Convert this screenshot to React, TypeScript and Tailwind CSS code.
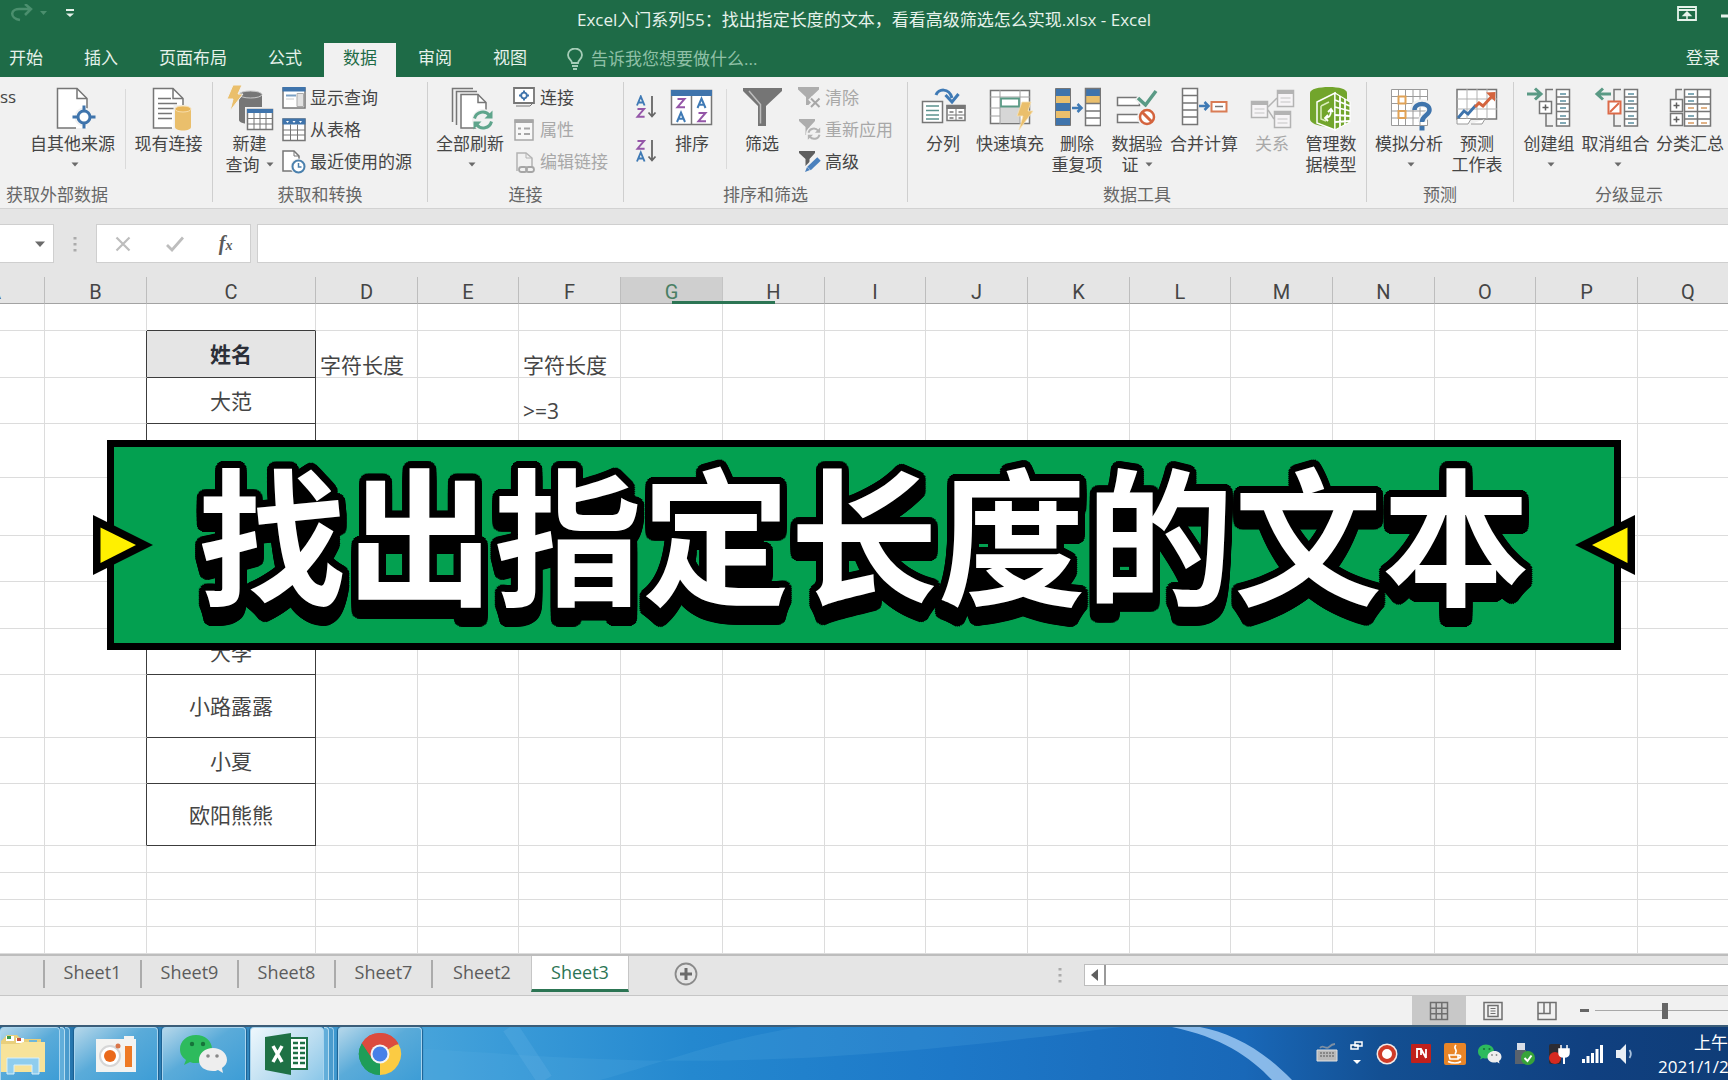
import React from "react";

type Kids = { children?: React.ReactNode };

const G = "#767676";

function Big({ children }: Kids) {
  return (
    <svg width="48" height="48" viewBox="0 0 48 48" fill="none" className="shrink-0" aria-hidden="true">
      {children}
    </svg>
  );
}

function Small({ children }: Kids) {
  return (
    <svg width="24" height="24" viewBox="0 0 24 24" fill="none" className="shrink-0" aria-hidden="true">
      {children}
    </svg>
  );
}

function Caret() {
  return (
    <svg width="8" height="5" viewBox="0 0 8 5" className="shrink-0" aria-hidden="true">
      <path d="M0.5 0.5h7L4 4.5z" fill="#6a6a6a" />
    </svg>
  );
}

/* ---------- large ribbon icons ---------- */

const Doc = () => (
  <>
    <path d="M8.500 3.500H28L38 13.500V43H8.500z" fill="#fff" />
    <path d="M38 26V13.500L28 3.500H8.500V43H27" stroke={G} strokeWidth="1.500" />
    <path d="M28 3.500V13.500H38" stroke={G} strokeWidth="1.500" />
  </>
);

const OtherSourceIcon = () => (
  <Big>
    <Doc />
    <circle cx="35" cy="32" r="9.500" fill="#f1f1f1" />
    <circle cx="35" cy="32" r="6" fill="#fff" stroke="#3f74ac" strokeWidth="3" />
    <path d="M35 20.500v6M35 37.500v6M23.500 32h6M40.500 32h6" stroke="#3f74ac" strokeWidth="3" />
  </Big>
);

const ExistingIcon = () => (
  <Big>
    <Doc />
    <path d="M13 13.500h13M13 18.500h19M13 23.500h16M13 28.500h14M13 33.500h14" stroke={G} strokeWidth="1.500" />
    <path d="M28.500 20h19v26h-19z" fill="#f1f1f1" />
    <path d="M30 24v18c0 2 3.500 3.500 8 3.500s8-1.500 8-3.500V24z" fill="#eabf6c" />
    <ellipse cx="38" cy="24" rx="8" ry="3" fill="#e8b659" stroke="#f7deae" />
  </Big>
);

const MiniTable = ({ x, y }: { x: number; y: number }) => (
  <g transform={`translate(${x} ${y})`}>
    <path d="M0.500 0.500h25v20h-25z" fill="#fff" stroke={G} strokeWidth="1.500" />
    <path d="M0 0h26v4H0z" fill="#3f74ac" />
    <path d="M7 4v16M13 4v16M19 4v16M1 9.500h24M1 15h24" stroke={G} />
  </g>
);

const NewQueryIcon = () => (
  <Big>
    <path d="M13 9v26c0 2 4 4 11.500 4S36 37 36 35V9z" fill="#767676" />
    <ellipse cx="24.500" cy="9.500" rx="11.500" ry="3.500" fill="#767676" stroke="#c9c9c9" />
    <path d="M7 0h9l-4 9h5L4 26l3-12H1z" fill="#eabf6c" stroke="#f1f1f1" strokeWidth="1" />
    <path d="M19 22h29v25H19z" fill="#f1f1f1" />
    <MiniTable x={21} y={24} />
  </Big>
);

const RefreshArrows = ({ c }: { c: string }) => (
  <>
    <path d="M1.500 8a8.500 8.500 0 0 1 15-3M18.500 11a8.500 8.500 0 0 1-15 3" stroke={c} strokeWidth="3" />
    <path d="M19.500 0v8h-8zM.5 19v-8h8z" fill={c} />
  </>
);

const RefreshAllIcon = () => (
  <Big>
    <path d="M6.500 37V3.500H27M10.500 40V6.500H31" stroke={G} strokeWidth="1.500" />
    <path d="M15 9.500H32L40 17.500V43H15z" fill="#fff" stroke={G} strokeWidth="1.500" />
    <path d="M32 9.500v8h8" stroke={G} strokeWidth="1.500" />
    <circle cx="37" cy="35" r="11" fill="#f1f1f1" />
    <g transform="translate(27 25.500)">
      <RefreshArrows c="#5fa58c" />
    </g>
  </Big>
);

const LetterA = ({ x, y, s = 1 }: { x: number; y: number; s?: number }) => (
  <path
    transform={`translate(${x} ${y}) scale(${s})`}
    d="M0.500 10L4.500 0.500L8.500 10M2 6.800H7"
    stroke="#3f7ab5"
    strokeWidth="2"
  />
);
const LetterZ = ({ x, y, s = 1 }: { x: number; y: number; s?: number }) => (
  <path
    transform={`translate(${x} ${y}) scale(${s})`}
    d="M0.500 1H7.500L0.500 9.200H8"
    stroke="#9456a8"
    strokeWidth="2"
  />
);

const SortIcon = () => (
  <Big>
    <path d="M3.500 5.500h40v34h-40z" fill="#fff" stroke={G} strokeWidth="1.500" />
    <path d="M3 5h41v6H3z" fill="#3f74ac" />
    <path d="M23.500 11v29" stroke={G} strokeWidth="1.500" />
    <LetterZ x={9} y={13} />
    <LetterA x={8.5} y={27} />
    <LetterA x={29} y={13} />
    <LetterZ x={30} y={27} />
  </Big>
);

const FilterIcon = () => (
  <Big>
    <path d="M5 3h39v3L28 21v20h-8V21L5 6z" fill="#757575" />
    <path d="M11 6l11.500 13.500v19" stroke="#bdbdbd" strokeWidth="1.500" />
  </Big>
);

const TextColsIcon = () => (
  <Big>
    <path d="M17 10c2-6 13-8 16 3" stroke="#3f7ab5" strokeWidth="3" />
    <path d="M26.500 10L33 17l6.500-8" stroke="#3f7ab5" strokeWidth="3" />
    <path d="M3.500 16.500h20v21h-20z" fill="#fff" stroke={G} strokeWidth="1.500" />
    <path d="M7 21h13M7 25.500h13M7 30h13M7 34h13" stroke="#5b938f" strokeWidth="1.500" />
    <path d="M28 20.500h18v15H28z" fill="#fff" stroke={G} strokeWidth="1.500" />
    <path d="M27.500 20h19v4h-19z" fill={G} />
    <path d="M37 24v12M29 30h17" stroke={G} />
    <path d="M30.500 27h4M39.500 27h4M30.500 33h4M39.500 33h4" stroke={G} strokeWidth="1.500" />
  </Big>
);

const FlashFillIcon = () => (
  <Big>
    <path d="M4.500 5.500h39v33h-39z" fill="#fff" stroke={G} strokeWidth="1.500" />
    <path d="M14 22h20v16H14z" fill="#d6d6d6" />
    <path d="M4 12h40M4 23h10M4 31h10M14 5v34M34 5v34" stroke="#a0a0a0" />
    <path d="M15 13.500h18v8H15z" fill="#fff" stroke="#5a9a85" strokeWidth="1.800" />
    <path d="M36 17h9l-3 9h5L33 45l4-14h-6z" fill="#eabf6c" stroke="#f6e2b8" strokeWidth="0.800" />
  </Big>
);

const BlueArrow = ({ x, y }: { x: number; y: number }) => (
  <path d={`M${x} ${y}h9M${x + 5.5} ${y - 4}l4 4l-4 4`} stroke="#3f7ab5" strokeWidth="2.500" />
);

const RemoveDupIcon = () => (
  <Big>
    <path d="M2.500 3.500h15v37h-15z" fill="#3f74ac" />
    <path d="M2.500 11h15v7h-15zM2.500 26h15v7h-15z" fill="#eabf6c" />
    <path d="M2.500 3.500h15v37h-15z" stroke={G} />
    <path d="M32.500 3.500h15v37h-15z" fill="#fff" />
    <path d="M32.500 3.500h15V11h-15z" fill="#3f74ac" />
    <path d="M32.500 11h15v7h-15z" fill="#eabf6c" />
    <path d="M32.500 3.500h15v37h-15zM32.500 18.500h15M32.500 26h15M32.500 33h15" stroke={G} strokeWidth="1.500" />
    <BlueArrow x={19} y={23} />
  </Big>
);

const ValidationIcon = () => (
  <Big>
    <path d="M4.500 12.500h22v8h-22zM4.500 29.500h22v8h-22z" fill="#fff" stroke={G} strokeWidth="1.500" />
    <path d="M24 12l8 7L43 6" stroke="#f1f1f1" strokeWidth="7" />
    <path d="M25 13l7.500 7L43 6" stroke="#5a9a85" strokeWidth="3.500" />
    <circle cx="34" cy="32" r="10" fill="#f1f1f1" />
    <circle cx="34" cy="32" r="7" fill="#fff" stroke="#d4643e" strokeWidth="2.500" />
    <path d="M29 27l10 10" stroke="#d4643e" strokeWidth="3" />
  </Big>
);

const ConsolidateIcon = () => (
  <Big>
    <path d="M2.500 3.500h15v36h-15z" fill="#fff" />
    <path d="M2.500 3.500h15v36h-15zM2.500 10.500h15M2.500 18h15M2.500 25h15M2.500 32h15" stroke={G} strokeWidth="1.500" />
    <BlueArrow x={19} y={21} />
    <path d="M31.500 17h15v9.500h-15z" fill="#fff" stroke="#d97c55" strokeWidth="2" />
    <path d="M35 21.500h8" stroke={G} strokeWidth="1.500" />
  </Big>
);

const RelBox = ({ x, y }: { x: number; y: number }) => (
  <g transform={`translate(${x} ${y})`}>
    <path d="M0.500 0.500h16v16h-16z" fill="#f6f4f6" stroke="#b3b3b3" strokeWidth="1.500" />
    <path d="M0 0h17v4H0z" fill="#b3b3b3" />
    <path d="M3.500 8h10M3.500 12h10" stroke="#c4c4c4" />
  </g>
);

const RelationsIcon = () => (
  <Big>
    <path d="M20 22l9-9M20 25l6 9" stroke="#b3b3b3" strokeWidth="1.500" />
    <RelBox x={3} y={16} />
    <RelBox x={29} y={5} />
    <RelBox x={26} y={26} />
  </Big>
);

const DataModelIcon = () => (
  <Big>
    <path d="M3 8c0-4 9-6 19-6s18 2 18 6v20L22 42C10 41 3 38 3 34z" fill="#72a52c" />
    <path d="M10 17L28 8v37L10 38z" fill="#72a52c" stroke="#fff" strokeWidth="1.500" />
    <path d="M28 8l15 9v20L28 45z" fill="#72a52c" stroke="#fff" strokeWidth="1.200" />
    <path d="M28 15l15 6M28 22l15 4M28 30l15 1M28 37l15-1M33 11v31M38 14v26" stroke="#fff" strokeWidth="1.800" />
    <path d="M14 21l8-4M14 21v13l5 2" stroke="#d9edba" strokeWidth="1.500" />
    <path d="M18 33c5 0 6-3 6-8M21 27l3-3 2 3M21 30l-3 3 3 3" stroke="#fff" strokeWidth="1.800" />
  </Big>
);

const WhatIfIcon = () => (
  <Big>
    <path d="M6.500 4.500h36v36h-36z" fill="#fff" />
    <path d="M6.500 4.500h36v36h-36zM13.500 4v37M20.500 4v37M28 4v37M35 4v37M6 11.500h37M6 18.500h37M6 26h37M6 33h37" stroke="#9a9a9a" />
    <path d="M13.500 11.500h7v7h-7zM13.500 26h7v7h-7z" stroke="#e0a256" strokeWidth="2" />
    <path d="M29 25c0-9 16-9 16 0 0 6-8 5-8 12" stroke="#f1f1f1" strokeWidth="8" />
    <path d="M29.500 25c0-8 15-8 15 0 0 5.500-7.500 5-7.500 12" stroke="#3f74ac" strokeWidth="4.500" />
    <path d="M34.500 41h5v4.500h-5z" fill="#3f74ac" />
  </Big>
);

const ForecastIcon = () => (
  <Big>
    <path d="M4 4.500h39.500v29.500H4z" fill="#fff" stroke={G} strokeWidth="1.500" />
    <path d="M14 4v30M24 4v30M34 4v30M4 14h40M4 24h40" stroke="#b3b3b3" />
    <path d="M4 34v5h11l3-5M18 39h11l3-5" fill="#fff" stroke="#9a9a9a" />
    <path d="M5 33l6-7 4 3 8-9" stroke="#3f74ac" strokeWidth="2.800" />
    <path d="M22 22l4-4 4 3L41 9" stroke="#d4643e" strokeWidth="3" />
    <path d="M33 7.500l9.500-.5-.5 9.500z" fill="#d4643e" />
  </Big>
);

const List5 = ({ x, w = 13 }: { x: number; w?: number }) => (
  <g transform={`translate(${x} 4)`}>
    <path d={`M.5 .5h${w}v36.500h-${w}zM.5 8h${w}M.5 15h${w}M.5 22.500h${w}M.5 30h${w}`} fill="#fff" stroke={G} strokeWidth="1.500" />
    <path d="M4 5h6M4 12h6M4 19h6M4 27h6M4 34h6" stroke="#5a8fa0" strokeWidth="1.500" />
  </g>
);

const PlusBox = ({ x, y }: { x: number; y: number }) => (
  <g transform={`translate(${x} ${y})`}>
    <path d="M.5 .5h12v12H.5z" fill="#fff" stroke={G} strokeWidth="1.500" />
    <path d="M3.500 6.500h6M6.500 3.500v6" stroke="#5f5f5f" strokeWidth="1.500" />
  </g>
);

const GroupIcon = () => (
  <Big>
    <path d="M2 9h13M10 3.500l6 5.500l-6 5.500" stroke="#5a9a85" strokeWidth="3" />
    <path d="M28 4.500h-7V41h7" stroke={G} strokeWidth="1.500" />
    <PlusBox x={14} y={16} />
    <List5 x={31} />
  </Big>
);

const UngroupIcon = () => (
  <Big>
    <path d="M19 9H5M11 3.500L5 9l6 5.500" stroke="#5a9a85" strokeWidth="3" />
    <path d="M29 4.500h-7V41h7" stroke={G} strokeWidth="1.500" />
    <path d="M16.500 16.500h12v12h-12z" fill="#fff" stroke="#dc6a48" strokeWidth="2" />
    <path d="M18 27l9-9" stroke="#dc6a48" strokeWidth="2" />
    <List5 x={32} />
  </Big>
);

const SubtotalIcon = () => (
  <Big>
    <path d="M16 4.500h-6V14" stroke={G} strokeWidth="1.500" />
    <PlusBox x={4} y={14} />
    <PlusBox x={4} y={28} />
    <path d="M18.500 4.500h26V41h-26z" fill="#fff" />
    <path d="M18.500 4.500h26V41h-26zM31.500 4v37M18 12h26M18 19h26M18 26.500h26M18 34h26" stroke={G} strokeWidth="1.500" />
    <path d="M22 9h6M22 16h6M22 31h6" stroke="#5a8fa0" strokeWidth="1.500" />
    <path d="M22 23h6M35 23h6M22 38h6M35 38h6" stroke="#d89b62" strokeWidth="1.500" />
  </Big>
);

/* ---------- small ribbon icons ---------- */

const ShowQueryIcon = () => (
  <Small>
    <path d="M1 2h22v20H1z" fill="#fff" stroke={G} strokeWidth="1.500" />
    <path d="M.5 1h23v4.500H.5z" fill="#3f74ac" />
    <path d="M4 9.500h10" stroke="#7aa0c4" strokeWidth="2" />
    <path d="M15 7.500h6.500v13H15z" fill="#e2e2e2" stroke="#aaa" />
    <path d="M4 13h8" stroke="#ccc" />
  </Small>
);
const FromTableIcon = () => (
  <Small>
    <path d="M1 1h22v21.500H1z" fill="#fff" stroke={G} strokeWidth="1.500" />
    <path d="M.5 .5h23v6H.5z" fill="#3f74ac" />
    <path d="M4 3h3l-1.500 2zM10.500 3h3L12 5zM17 3h3l-1.500 2z" fill="#fff" />
    <path d="M8.500 6.500v16M15.500 6.500v16M1 12h22M1 17h22" stroke={G} />
  </Small>
);
const RecentIcon = () => (
  <Small>
    <path d="M1 1h11l5 5v15H1z" fill="#fff" stroke={G} strokeWidth="1.500" />
    <path d="M12 1v5h5" stroke={G} />
    <circle cx="16.500" cy="16.500" r="8" fill="#f1f1f1" />
    <circle cx="16.500" cy="16.500" r="6" fill="#fff" stroke="#4a80ad" strokeWidth="2" />
    <path d="M16.500 13v4h3" stroke="#4a80ad" strokeWidth="1.500" />
  </Small>
);
const ConnIcon = () => (
  <Small>
    <path d="M2 2h20v15H2z" fill="#fff" stroke={G} strokeWidth="1.800" />
    <path d="M4 20h14l2-2" stroke={G} />
    <circle cx="12" cy="9.500" r="2.800" stroke="#3f74ac" strokeWidth="1.800" />
    <path d="M12 4.500v2M12 12.500v2M7 9.500h2M15 9.500h2" stroke="#3f74ac" strokeWidth="2" />
  </Small>
);
const PropIcon = () => (
  <Small>
    <path d="M3 2h18v20H3z" fill="#f8f8f8" stroke="#a6a6a6" strokeWidth="1.500" />
    <path d="M2.500 1.500h19V5h-19z" fill="#a6a6a6" />
    <path d="M6 10.500h3M6 16h3M12 10.500h6M12 16h6" stroke="#a6a6a6" strokeWidth="1.800" />
  </Small>
);
const EditLinkIcon = () => (
  <Small>
    <path d="M5 21V3h9l6 5v9" stroke="#b3b3b3" strokeWidth="1.500" />
    <path d="M14 3v5h6" stroke="#b3b3b3" />
    <rect x="7" y="17" width="8" height="5" rx="2.500" stroke="#a6a6a6" strokeWidth="1.800" />
    <rect x="14" y="17" width="8" height="5" rx="2.500" stroke="#a6a6a6" strokeWidth="1.800" />
  </Small>
);
const Funnel = ({ c }: { c: string }) => <path d="M1 1h21v2.500L14 11v8h-5v-8L1 3.500z" fill={c} />;
const ClearIcon = () => (
  <Small>
    <Funnel c="#adadad" />
    <path d="M13 12l9 9M22 12l-9 9" stroke="#f1f1f1" strokeWidth="5" />
    <path d="M14 12.500l8.500 8.500M22.500 12.500L14 21" stroke="#a6a6a6" strokeWidth="2" />
  </Small>
);
const ReapplyIcon = () => (
  <Small>
    <path d="M2 1h16v2l-5.500 6v8h-4V9L2 3z" fill="#adadad" />
    <circle cx="17" cy="16" r="8" fill="#f1f1f1" />
    <g transform="translate(10.500 9.500) scale(.65)">
      <RefreshArrows c="#b3b3b3" />
    </g>
  </Small>
);
const AdvancedIcon = () => (
  <Small>
    <path d="M2 1h16v2l-5.500 6v7h-4V9L2 3z" fill="#5f5f5f" />
    <path d="M10 20L21 9" stroke="#f1f1f1" strokeWidth="8" />
    <path d="M12 18.500L22 9" stroke="#4a80bd" strokeWidth="5" />
    <path d="M8 22l2-5 3 3z" fill="#4a80bd" />
  </Small>
);
const SortSmall = ({ desc }: { desc?: boolean }) => (
  <svg width="24" height="24" viewBox="0 0 24 24" fill="none" aria-hidden="true">
    {desc ? (
      <>
        <LetterZ x={3} y={1} s={0.95} />
        <LetterA x={2.5} y={13} s={0.95} />
      </>
    ) : (
      <>
        <LetterA x={2.5} y={1} s={0.95} />
        <LetterZ x={3} y={13} s={0.95} />
      </>
    )}
    <path d="M18 1v20M14.500 17.500L18 21.500l3.500-4" stroke="#666" strokeWidth="1.800" />
  </svg>
);

/* ---------- ribbon building blocks ---------- */

function BigButton({
  icon, lines, drop, className = "", disabled,
}: { icon: React.ReactNode; lines: string[]; drop?: boolean; className?: string; disabled?: boolean }) {
  return (
    <button
      type="button"
      disabled={disabled}
      className={`flex shrink-0 flex-col items-center pt-2 leading-[21px] whitespace-nowrap disabled:text-[#a8a8a8] ${className}`}
    >
      {icon}
      <span>{lines[0]}</span>
      {(lines[1] || drop) && (
        <span className={`flex h-[21px] items-center gap-1.5 ${lines[1] ? "" : "pl-1"}`}>
          {lines[1]}
          {drop && <Caret />}
        </span>
      )}
    </button>
  );
}

function SmallButton({ icon, text, disabled }: { icon: React.ReactNode; text: string; disabled?: boolean }) {
  return (
    <button type="button" disabled={disabled} className="flex h-8 items-center gap-1 whitespace-nowrap disabled:text-[#a8a8a8]">
      {icon}
      <span>{text}</span>
    </button>
  );
}

function Group({ label, className, labelClass = "text-center", children }: Kids & { label: string; className: string; labelClass?: string }) {
  return (
    <section aria-label={label} className={`flex shrink-0 flex-col ${className}`}>
      <div className="flex h-[107px] items-start">{children}</div>
      <div className={`leading-[21px] text-[#666] ${labelClass}`}>{label}</div>
    </section>
  );
}

const Divider = () => <div className="mt-[5px] mb-1.5 w-px shrink-0 bg-[#cfcfcf]" />;
const InnerDivider = () => <div className="mt-3 h-20 w-px shrink-0 bg-[#dadada]" />;

const TABS = ["开始", "插入", "页面布局", "公式", "数据", "审阅", "视图"];

function TitleBar() {
  return (
    <header className="bg-[#1e6b47] text-[#e6f2eb]">
      <div className="grid h-[43px] grid-cols-[1fr_auto_1fr] items-start">
        <div className="flex items-start pt-1 pl-2.5">
          <svg width="70" height="20" viewBox="0 0 70 20" fill="none" aria-hidden="true">
            <path d="M10 16C-1 14 0 4 11 5h9M15 0l6 5-6 6" stroke="#4b8f6e" strokeWidth="2.500" />
            <path d="M30 7h7l-3.500 4z" fill="#4b8f6e" />
            <path d="M56 6h8" stroke="#e6f2eb" strokeWidth="2" />
            <path d="M56 9.500h8L60 13z" fill="#e6f2eb" />
          </svg>
        </div>
        <h2 className="pt-2 text-[17px] leading-6 whitespace-nowrap">Excel入门系列55：找出指定长度的文本，看看高级筛选怎么实现.xlsx - Excel</h2>
        <div className="flex justify-end pt-1.5">
          <svg width="51" height="16" viewBox="0 0 51 16" fill="none" aria-hidden="true">
            <path d="M1 1h18v13H1zM1 4h18" stroke="#e6f2eb" strokeWidth="1.800" />
            <path d="M10 13V7M6.500 9.500L10 6l3.500 3.500z" stroke="#e6f2eb" strokeWidth="1.500" fill="#e6f2eb" />
            <path d="M44 10h8" stroke="#e6f2eb" strokeWidth="3" />
          </svg>
        </div>
      </div>
      <nav aria-label="功能区" className="flex h-[34px] items-stretch gap-[3px]">
        {TABS.map((t, i) => (
          <button
            key={t}
            type="button"
            aria-current={t === "数据" ? "page" : undefined}
            className={`pr-[19px] pb-1 ${i === 0 ? "pl-[9px]" : "pl-[19px]"} ${t === "数据" ? "bg-[#f1f1f1] text-[#1e6b47]" : ""}`}
          >
            {t}
          </button>
        ))}
        <label className="ml-[18px] flex flex-1 items-center gap-2 pb-0.5">
          <svg width="16" height="22" viewBox="0 0 16 22" fill="none" aria-hidden="true">
            <path d="M5 15c0-3-4-4-4-8a7 6.500 0 0 1 14 0c0 4-4 5-4 8zM5 18h6M6 21h4" stroke="#a5cdb8" strokeWidth="1.800" />
          </svg>
          <input
            type="text"
            aria-label="告诉我您想要做什么"
            placeholder="告诉我您想要做什么..."
            className="w-60 bg-transparent outline-none placeholder:text-[#8fc0a6]"
          />
        </label>
        <button type="button" className="pr-2 pb-1">登录</button>
      </nav>
    </header>
  );
}

function Ribbon() {
  return (
    <div className="flex h-[132px] overflow-hidden border-b border-[#d2d2d2] bg-[#f1f1f1] text-[#454545]">
      <Group label="获取外部数据" className="w-[212px]" labelClass="pl-1.5">
        <span className="w-[30px] pt-2 leading-6">ss</span>
        <BigButton icon={<OtherSourceIcon />} lines={["自其他来源"]} drop className="mr-2.5 w-[85px]" />
        <InnerDivider />
        <BigButton icon={<ExistingIcon />} lines={["现有连接"]} className="w-[85px]" />
      </Group>
      <Divider />
      <Group label="获取和转换" className="w-[214px]">
        <BigButton icon={<NewQueryIcon />} lines={["新建", "查询"]} drop className="ml-1 w-[65px]" />
        <div className="flex flex-col pt-[5px]">
          <SmallButton icon={<ShowQueryIcon />} text="显示查询" />
          <SmallButton icon={<FromTableIcon />} text="从表格" />
          <SmallButton icon={<RecentIcon />} text="最近使用的源" />
        </div>
      </Group>
      <Divider />
      <Group label="连接" className="w-[195px]">
        <BigButton icon={<RefreshAllIcon />} lines={["全部刷新"]} drop className="w-[84px]" />
        <div className="flex flex-col pt-[5px]">
          <SmallButton icon={<ConnIcon />} text="连接" />
          <SmallButton icon={<PropIcon />} text="属性" disabled />
          <SmallButton icon={<EditLinkIcon />} text="编辑链接" disabled />
        </div>
      </Group>
      <Divider />
      <Group label="排序和筛选" className="w-[283px]">
        <div className="flex w-[34px] flex-col items-end gap-5 pt-[18px]">
          <button type="button" aria-label="升序"><SortSmall /></button>
          <button type="button" aria-label="降序"><SortSmall desc /></button>
        </div>
        <BigButton icon={<SortIcon />} lines={["排序"]} className="w-[68px]" />
        <InnerDivider />
        <BigButton icon={<FilterIcon />} lines={["筛选"]} className="w-[70px]" />
        <div className="flex flex-col pt-[5px]">
          <SmallButton icon={<ClearIcon />} text="清除" disabled />
          <SmallButton icon={<ReapplyIcon />} text="重新应用" disabled />
          <SmallButton icon={<AdvancedIcon />} text="高级" />
        </div>
      </Group>
      <Divider />
      <Group label="数据工具" className="w-[458px]">
        <BigButton icon={<TextColsIcon />} lines={["分列"]} className="ml-[7px] w-14" />
        <BigButton icon={<FlashFillIcon />} lines={["快速填充"]} className="w-[78px]" />
        <BigButton icon={<RemoveDupIcon />} lines={["删除", "重复项"]} className="w-14" />
        <BigButton icon={<ValidationIcon />} lines={["数据验", "证"]} drop className="w-16" />
        <BigButton icon={<ConsolidateIcon />} lines={["合并计算"]} className="w-[70px]" />
        <BigButton icon={<RelationsIcon />} lines={["关系"]} disabled className="w-[66px]" />
        <BigButton icon={<DataModelIcon />} lines={["管理数", "据模型"]} className="w-[52px]" />
      </Group>
      <Divider />
      <Group label="预测" className="w-[146px]">
        <BigButton icon={<WhatIfIcon />} lines={["模拟分析"]} drop className="ml-2 w-[68px]" />
        <BigButton icon={<ForecastIcon />} lines={["预测", "工作表"]} className="w-[68px]" />
      </Group>
      <Divider />
      <Group label="分级显示" className="min-w-[214px] flex-1" labelClass="w-[230px] text-center">
        <BigButton icon={<GroupIcon />} lines={["创建组"]} drop className="ml-[9px] w-[52px]" />
        <BigButton icon={<UngroupIcon />} lines={["取消组合"]} drop className="w-[81px]" />
        <BigButton icon={<SubtotalIcon />} lines={["分类汇总"]} className="w-[68px]" />
      </Group>
    </div>
  );
}

const Dots = () => (
  <svg width="4" height="16" viewBox="0 0 4 16" aria-hidden="true">
    <path d="M.5 1h3v2.500h-3zM.5 7h3v2.500h-3zM.5 13h3v2.500h-3z" fill="#ababab" />
  </svg>
);

function FormulaBar() {
  return (
    <div className="flex h-[68px] items-start bg-[#e5e5e5] pt-[15px]">
      <div className="flex h-[39px] w-[54px] items-center justify-end border border-l-0 border-[#cfcfcf] bg-white pr-2">
        <button type="button" aria-label="名称框">
          <svg width="10" height="6" viewBox="0 0 10 6" aria-hidden="true">
            <path d="M0 .5h10L5 6z" fill="#6a6a6a" />
          </svg>
        </button>
      </div>
      <div className="flex h-[39px] w-[42px] items-center justify-center"><Dots /></div>
      <div className="mr-1.5 flex h-[39px] w-[155px] items-center justify-around border border-[#cfcfcf] bg-white">
        <button type="button" aria-label="取消">
          <svg width="16" height="16" viewBox="0 0 16 16" aria-hidden="true"><path d="M1.500 1.500l13 13M14.500 1.500l-13 13" stroke="#bdbdbd" strokeWidth="2.200" /></svg>
        </button>
        <button type="button" aria-label="输入">
          <svg width="18" height="16" viewBox="0 0 18 16" fill="none" aria-hidden="true"><path d="M1 9l5 5L17 1.500" stroke="#bdbdbd" strokeWidth="2.800" /></svg>
        </button>
        <button type="button" aria-label="插入函数" className="font-['Liberation_Serif',serif] text-xl leading-6 font-bold text-[#5a5a5a] italic">
          f<span className="text-sm">x</span>
        </button>
      </div>
      <input type="text" aria-label="编辑栏" className="h-[39px] min-w-0 flex-1 border border-r-0 border-[#cfcfcf] bg-white outline-none" />
    </div>
  );
}

const COLS = [
  { n: "A", w: "w-[45px]" }, { n: "B", w: "w-[102px]" }, { n: "C", w: "w-[169px]" },
  { n: "D", w: "w-[102px]" }, { n: "E", w: "w-[101px]" }, { n: "F", w: "w-[102px]" },
  { n: "G", w: "w-[102px]" }, { n: "H", w: "w-[102px]" }, { n: "I", w: "w-[101px]" },
  { n: "J", w: "w-[102px]" }, { n: "K", w: "w-[102px]" }, { n: "L", w: "w-[101px]" },
  { n: "M", w: "w-[102px]" }, { n: "N", w: "w-[102px]" }, { n: "O", w: "w-[101px]" },
  { n: "P", w: "w-[102px]" }, { n: "Q", w: "w-[101px]" },
];

const ROWS: { h: string; name?: string; D?: string; F?: string; head?: boolean; boxed?: boolean }[] = [
  { h: "h-[27px]" },
  { h: "h-[47px]", name: "姓名", D: "字符长度", F: "字符长度", head: true, boxed: true },
  { h: "h-[46px]", name: "大范", F: ">=3", boxed: true },
  { h: "h-[54px]", name: "", boxed: true },
  { h: "h-[58px]", name: "", boxed: true },
  { h: "h-[46px]", name: "", boxed: true },
  { h: "h-[47px]", name: "", boxed: true },
  { h: "h-[46px]", name: "大李", boxed: true },
  { h: "h-[63px]", name: "小路露露", boxed: true },
  { h: "h-[46px]", name: "小夏", boxed: true },
  { h: "h-[62px]", name: "欧阳熊熊", boxed: true },
  { h: "h-[27px]" }, { h: "h-[27px]" }, { h: "h-[27px]" }, { h: "h-[27px]" },
];

function Sheet() {
  return (
    <div className="overflow-hidden bg-white">
      <table className="w-[1739px] table-fixed border-separate border-spacing-0 text-[21px] leading-6 text-[#454545]">
        <colgroup>
          {COLS.map((c) => <col key={c.n} className={c.w} />)}
        </colgroup>
        <thead>
          <tr className="h-[27px]">
            {COLS.map((c) => (
              <th
                key={c.n}
                scope="col"
                className={`relative border-r border-b border-b-[#a3a3a3] px-0 pt-1 pb-0 font-['Roboto',sans-serif] text-xl leading-5 font-normal ${
                  c.n === "G" ? "border-r-[#c4c4c4] bg-[#cfcfcf] text-[#4a7f64]" : "border-r-[#bdbdbd] bg-[#e5e5e5]"
                } ${c.n === "A" ? "text-left" : ""}`}
              >
                {c.n === "A" ? <span className="-ml-3">A</span> : c.n}
                {c.n === "G" && <span className="absolute top-6 left-1/2 z-10 h-[3px] w-[103px] bg-[#2c7554]" />}
              </th>
            ))}
          </tr>
        </thead>
        <tbody>
          {ROWS.map((r, ri) => {
            const nextBoxed = ROWS[ri + 1]?.boxed;
            return (
              <tr key={ri} className={r.h}>
                {COLS.map((c) => {
                  const dark = c.n === "C" && (r.boxed || nextBoxed);
                  const side = r.boxed && (c.n === "B" || c.n === "C");
                  const text = c.n === "C" ? r.name : c.n === "D" ? r.D : c.n === "F" ? r.F : undefined;
                  return (
                    <td
                      key={c.n}
                      className={`border-r border-b p-0 whitespace-nowrap ${dark ? "border-b-[#3c3c3c]" : "border-b-[#dcdcdc]"} ${
                        side ? "border-r-[#3c3c3c]" : "border-r-[#dcdcdc]"
                      } ${c.n === "C" ? "text-center align-middle" : "pl-1 align-bottom"} ${
                        c.n === "C" && r.head ? "bg-[#e5e5e5] font-bold text-[#2b2f38]" : ""
                      }`}
                    >
                      {text}
                    </td>
                  );
                })}
              </tr>
            );
          })}
        </tbody>
      </table>
    </div>
  );
}

const SHEETS = ["Sheet1", "Sheet9", "Sheet8", "Sheet7", "Sheet2"];

function SheetTabs() {
  return (
    <div className="flex h-[42px] items-start border-t-2 border-b border-t-[#bdbdbd] border-b-[#c6c6c6] bg-[#e5e5e5] text-[18px] text-[#5c5c5c]">
      <div className="mt-1 h-7 w-[45px] border-r-2 border-[#ababab]" />
      {SHEETS.map((s, i) => (
        <button
          key={s}
          type="button"
          className={`mt-1 h-7 pb-1 leading-6 ${i === 4 ? "w-[98px]" : "w-[97px] border-r-2 border-[#ababab]"}`}
        >
          {s}
        </button>
      ))}
      <button type="button" aria-current="page" className="h-9 w-[98px] border-x border-b-3 border-x-[#c6c6c6] border-b-[#2c7554] bg-white text-[#2c7554]">
        Sheet3
      </button>
      <button type="button" aria-label="新工作表" className="mt-1.5 ml-[45px]">
        <svg width="24" height="24" viewBox="0 0 24 24" fill="none" aria-hidden="true">
          <circle cx="12" cy="12" r="10.500" stroke="#8a8a8a" strokeWidth="1.800" />
          <path d="M12 6v12M6 12h12" stroke="#6a6a6a" strokeWidth="3" />
        </svg>
      </button>
      <div className="flex-1" />
      <div className="flex w-[670px] items-center pt-2">
        <Dots />
        <div className="ml-[22px] flex h-[22px] flex-1 border-y border-l border-[#bdbdbd] bg-white">
          <button type="button" aria-label="向左滚动" className="flex w-[21px] items-center justify-center border-r-2 border-[#9a9a9a]">
            <svg width="7" height="12" viewBox="0 0 7 12" aria-hidden="true"><path d="M7 0v12L0 6z" fill="#5f5f5f" /></svg>
          </button>
        </div>
      </div>
    </div>
  );
}

function StatusBar() {
  return (
    <div className="flex h-[29px] items-center justify-end bg-[#f1f1f1]">
      <button type="button" aria-label="普通" className="flex h-full w-[54px] items-center justify-center bg-[#c8c8c8]">
        <svg width="20" height="20" viewBox="0 0 20 20" fill="none" aria-hidden="true">
          <path d="M1.500 1.500h17v17h-17zM7.200 1v18M12.800 1v18M1 7.200h18M1 12.800h18" stroke="#6f6f6f" strokeWidth="1.500" />
        </svg>
      </button>
      <button type="button" aria-label="页面布局" className="flex h-full w-[54px] items-center justify-center">
        <svg width="20" height="20" viewBox="0 0 20 20" fill="none" aria-hidden="true">
          <path d="M1 1.500h18v17H1zM5 4.500h10v11H5z" stroke="#6f6f6f" strokeWidth="1.500" />
          <path d="M7.500 7.500h5M7.500 10h5M7.500 12.500h5" stroke="#6f6f6f" />
        </svg>
      </button>
      <button type="button" aria-label="分页预览" className="flex h-full w-[54px] items-center justify-center">
        <svg width="20" height="20" viewBox="0 0 20 20" fill="none" aria-hidden="true">
          <path d="M1 1.500h18v17H1zM7 1.500v11M1 12.500h12v-11" stroke="#6f6f6f" strokeWidth="1.500" />
        </svg>
      </button>
      <button type="button" aria-label="缩小" className="flex h-full w-[21px] items-center justify-center">
        <span className="h-[3px] w-[9px] bg-[#666]" />
      </button>
      <input
        type="range"
        aria-label="缩放"
        defaultValue={53}
        className="h-5 w-[133px] appearance-none bg-[linear-gradient(#a8a8a8,#a8a8a8)] bg-[length:100%_1px] bg-center bg-no-repeat [&::-webkit-slider-thumb]:h-4 [&::-webkit-slider-thumb]:w-1.5 [&::-webkit-slider-thumb]:appearance-none [&::-webkit-slider-thumb]:bg-[#666]"
      />
    </div>
  );
}

const WeChat = ({ size, h }: { size: number; h: number }) => (
  <svg width={size} height={h} viewBox="0 0 48 38" aria-hidden="true">
    <path d="M16 0C7 0 0 6 0 14c0 5 2 8 6 11l-2 5 6-3c2 1 4 1 6 1 9 0 16-6 16-14S25 0 16 0z" fill="#2dbb5d" />
    <circle cx="12" cy="9" r="2.200" fill="#16733a" />
    <circle cx="23" cy="9" r="2.200" fill="#16733a" />
    <path d="M33 13c-8 0-14 5-14 12s6 11 14 11c2 0 3 0 5-1l5 3-1-5c3-2 5-5 5-8 0-7-6-12-14-12z" fill="#eeeeee" />
    <circle cx="28" cy="21" r="1.800" fill="#888" />
    <circle cx="37" cy="21" r="1.800" fill="#888" />
  </svg>
);

function TaskButton({ label, active, stacked, first, children }: Kids & { label: string; active?: boolean; stacked?: boolean; first?: boolean }) {
  return (
    <div className={`flex h-full shrink-0 ${first ? "w-[70px]" : "w-[84px]"}`}>
      <button
        type="button"
        aria-label={label}
        className={`flex min-w-0 flex-1 items-center rounded-t-[4px] border border-b-0 border-[#a8d4ee] shadow-[0_0_1px_1px_#1c5f8f] ${
          first ? "justify-start" : "justify-center"
        } ${
          active
            ? "bg-[linear-gradient(135deg,#eef7fc_0%,#b9dcf0_60%,#8ac7e9_100%)]"
            : "bg-[linear-gradient(145deg,#b5d7ea_0%,#5aabd9_45%,#3d9dd6_100%)]"
        }`}
      >
        {children}
      </button>
      {stacked && (
        <>
          <div className="h-full w-[5px] rounded-tr-[4px] border-t border-r border-[#b5dcf0] bg-[#62aeda]" />
          <div className="h-full w-[5px] rounded-tr-[4px] border-t border-r border-[#9accea] bg-[#4a9bcd]" />
        </>
      )}
    </div>
  );
}

function Taskbar() {
  return (
    <footer className="relative flex h-[55px] items-start overflow-hidden border-t-2 border-[#3b5d78] bg-[linear-gradient(90deg,#1f6da6_0%,#46a3da_24.500%,#3a9bd8_29%,#2488cf_40%,#1d78c8_55%,#1968b8_72%,#134f92_80%,#104080_92%,#0f3d78_100%)]">
      <svg className="absolute inset-0 h-full w-full" viewBox="0 0 1728 54" preserveAspectRatio="none" fill="none" aria-hidden="true">
        <path d="M420 22C640 36 760 48 1120 0H800C720 12 640 44 600 54H420z" fill="#5fb4e6" opacity="0.180" />
        <path d="M510 0L545 54" stroke="#8accf0" strokeWidth="16" opacity="0.150" />
        <path d="M1172 0C1220 10 1250 30 1272 54H1292C1262 22 1230 6 1200 0z" fill="#9cc8f2" opacity="0.850" />
      </svg>
      <div className="relative flex h-full gap-1">
        <TaskButton label="资源管理器" stacked first>
          <svg width="46" height="42" viewBox="2 0 46 42" aria-hidden="true">
            <path d="M2 8l6-6h10l4 4h20v32H2z" fill="#e9cf7b" />
            <path d="M7 3h8v5H7zM17 5h8v5h-8z" fill="#fff" />
            <path d="M8 3h4v3H8z" fill="#3b9b4c" />
            <path d="M18 5h4v3h-4z" fill="#c9503b" />
            <path d="M30 7h8v5h-8z" fill="#6fb7d9" />
            <path d="M2 11h18l4-2h22v30H2z" fill="#f7e39a" />
            <path d="M8 25h32v16h-7v-9H15v9H8z" fill="#8fcdee" stroke="#d8f0fb" />
          </svg>
        </TaskButton>
        <TaskButton label="录屏">
          <svg width="40" height="36" viewBox="0 0 40 36" aria-hidden="true">
            <path d="M0 3h28V0h10v3h2v33H0z" fill="#f3f3f1" />
            <circle cx="14" cy="20" r="10" fill="#fff" stroke="#d6d6d6" strokeWidth="2" />
            <circle cx="14" cy="20" r="6" fill="#ea6a1c" />
            <circle cx="22" cy="10" r="2.500" fill="#d9764a" />
            <path d="M29 10h7v21h-7z" fill="#ee7a25" />
          </svg>
        </TaskButton>
        <TaskButton label="微信"><WeChat size={48} h={38} /></TaskButton>
        <TaskButton label="Excel" active stacked>
          <svg width="44" height="44" viewBox="0 0 44 44" fill="none" aria-hidden="true">
            <path d="M25 6h17v31H25z" fill="#fff" stroke="#1e7145" strokeWidth="2" />
            <path d="M28 11h5M35 11h5M28 16h5M35 16h5M28 21h5M35 21h5M28 26h5M35 26h5M28 31h5M35 31h5" stroke="#1e7145" strokeWidth="2.500" />
            <path d="M0 5L26 1v42L0 38z" fill="#1e7145" />
            <path d="M8 14l9 16M17 14L8 30" stroke="#fff" strokeWidth="3.500" />
          </svg>
        </TaskButton>
        <TaskButton label="Chrome">
          <svg width="44" height="44" viewBox="0 0 44 44" aria-hidden="true">
            <path d="M22 22L3.800 11.500A21 21 0 0 1 40.200 11.500z" fill="#dc4b3e" />
            <path d="M22 22L3.800 11.500A21 21 0 0 0 22 43z" fill="#1f9d58" />
            <path d="M22 22L40.200 11.500A21 21 0 0 1 22 43z" fill="#fbcb43" />
            <path d="M22 12.500h18.700A21 21 0 0 0 3.800 11.500l10 15z" fill="#dc4b3e" />
            <path d="M3.800 11.500l10 15 8 5L22 43A21 21 0 0 1 3.800 11.500z" fill="#1f9d58" />
            <circle cx="22" cy="22" r="9.500" fill="#f4f4f4" />
            <circle cx="22" cy="22" r="7.500" fill="#4680e8" />
          </svg>
        </TaskButton>
      </div>
      <div className="relative ml-auto flex h-full items-start text-white">
        <div className="flex items-center gap-3 pt-3.5 pr-6">
          <svg width="22" height="24" viewBox="0 0 22 24" fill="none" aria-hidden="true">
            <path d="M4 6c3-4 6 2 9-1s4-3 6-3" stroke="#7d8fa3" strokeWidth="1.800" />
            <path d="M1 8h20v11H1z" fill="#b9b9b9" stroke="#e0e0e0" />
            <path d="M4 11h14M4 14h14" stroke="#777" strokeDasharray="2 1" strokeWidth="1.500" />
          </svg>
          <svg width="14" height="26" viewBox="0 0 14 26" fill="none" aria-hidden="true">
            <path d="M5 1h7v4H5zM1 4h7v4H1z" fill="#1d4f86" stroke="#fff" strokeWidth="1.500" />
            <path d="M3 19h8l-4 4z" fill="#fff" />
          </svg>
          <svg width="22" height="22" viewBox="0 0 22 22" aria-hidden="true">
            <circle cx="11" cy="11" r="10.500" fill="#f2e9e7" />
            <circle cx="11" cy="11" r="7" fill="#fff" stroke="#cf3b28" strokeWidth="4" />
          </svg>
          <svg width="22" height="22" viewBox="0 0 22 22" fill="none" aria-hidden="true">
            <rect x="1" y="1" width="20" height="19" rx="1" fill="#c0201c" />
            <path d="M7 15V6l4 0 5 9M11 6v6M16 6v9" stroke="#fff" strokeWidth="1.800" />
          </svg>
          <svg width="22" height="22" viewBox="0 0 22 22" fill="none" aria-hidden="true">
            <rect width="22" height="22" rx="2" fill="#e88527" />
            <path d="M12 2c-4 4 3 4-1 9M5 12h9v4H6zM14 12c4 0 3 3 0 3M4 18.500c4 2 10 2 13 0" stroke="#fff" strokeWidth="1.600" />
          </svg>
          <WeChat size={24} h={20} />
          <svg width="22" height="24" viewBox="0 0 22 24" fill="none" aria-hidden="true">
            <path d="M3 1h8v7H3z" fill="#d8dee8" />
            <path d="M1 8h11v14H1z" fill="#59626d" />
            <circle cx="14" cy="16" r="7" fill="#37a339" />
            <path d="M10.500 16l3 3 4-5.500" stroke="#fff" strokeWidth="2" />
          </svg>
          <svg width="22" height="22" viewBox="0 0 22 22" fill="none" aria-hidden="true">
            <rect x="1" y="1" width="12" height="20" rx="2" fill="#2c2c34" />
            <circle cx="7" cy="15" r="6" fill="#d62a20" />
            <path d="M11 6h10v4c0 3-2 4-5 4s-5-1-5-4zM13 2v4M19 2v4" fill="#fff" stroke="#fff" strokeWidth="1.500" />
            <path d="M16 14v7" stroke="#fff" strokeWidth="2" />
          </svg>
          <svg width="22" height="18" viewBox="0 0 22 18" aria-hidden="true">
            <path d="M0 14h3v4H0zM4.500 11h3v7h-3zM9 8h3v10H9zM13.500 4h3v14h-3zM18 0h3v18h-3z" fill="#fff" />
          </svg>
          <svg width="18" height="20" viewBox="0 0 18 20" fill="none" aria-hidden="true">
            <path d="M0 6h4l6-6v20l-6-6H0z" fill="#e8eef5" />
            <path d="M13.500 6c2 3 2 5 0 8" stroke="#a9c2dd" strokeWidth="1.800" />
          </svg>
        </div>
        <div className="w-[70px] overflow-hidden pt-1 text-right text-[17px] leading-6 whitespace-nowrap">
          <div>上午</div>
          <div>2021/1/2</div>
        </div>
      </div>
    </footer>
  );
}

/* Rounded 7px outline around the headline, repeated downwards as a 12px solid extrusion. */
const OUTLINE = [0, 4, 8, 12]
  .flatMap((drop) =>
    Array.from({ length: 24 }, (_, i) => {
      const a = (i * Math.PI) / 12;
      return `${(7 * Math.cos(a)).toFixed(1)}px ${(7 * Math.sin(a) + drop).toFixed(1)}px #000`;
    }),
  )
  .join(",");

function Banner() {
  return (
    <div className="absolute inset-x-[107px] top-[440px] flex h-[210px] items-center justify-center border-7 border-black bg-[#03a050]">
      <svg width="60" height="60" viewBox="0 0 60 60" className="absolute top-[68px] -left-[21px]" aria-hidden="true">
        <path d="M0 0L60 30L0 60z" fill="#000" />
        <path d="M7.500 12.500L43 30L7.500 48z" fill="#fff000" />
      </svg>
      <svg width="60" height="60" viewBox="0 0 60 60" className="absolute top-[68px] -right-[21px]" aria-hidden="true">
        <path d="M60 0L0 30L60 60z" fill="#000" />
        <path d="M52.500 12.500L17 30L52.500 48z" fill="#fff000" />
      </svg>
      <h1
        className="pb-4 text-[148px] leading-[180px] font-bold whitespace-nowrap text-white"
        style={{ textShadow: OUTLINE }}
      >
        找出指定长度的文本
      </h1>
    </div>
  );
}

export default function App() {
  return (
    <main className="relative overflow-hidden bg-[#e5e5e5] font-['Open_Sans','Noto_Sans_CJK_SC',sans-serif] text-[17px]" lang="zh-CN">
      <TitleBar />
      <Ribbon />
      <FormulaBar />
      <Sheet />
      <SheetTabs />
      <StatusBar />
      <Taskbar />
      <Banner />
    </main>
  );
}
